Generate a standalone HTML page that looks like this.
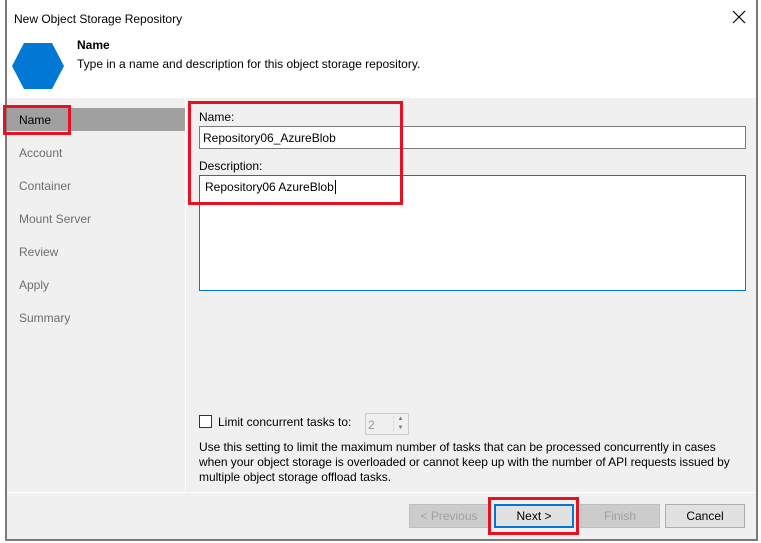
<!DOCTYPE html>
<html><head><meta charset="utf-8"><style>
*{margin:0;padding:0;box-sizing:border-box}
body{width:761px;height:543px;background:#fff;font-family:"Liberation Sans",sans-serif;font-size:12px;color:#000;position:relative;overflow:hidden}
.abs{position:absolute}
.win{left:5px;top:0;width:753px;height:541px;border:2px solid #7a7a7a;border-top:none;background:#f0f0f0}
.nav{left:19px;color:#6d6d6d;font-size:12px}
.btn{top:504px;height:24px;border:1px solid #adadad;background:#e1e1e1;text-align:center;line-height:22px;font-size:12px}
</style></head><body>
<div class="abs win"></div>
<div class="abs" style="left:7px;top:0;width:749px;height:98px;background:#fff"></div>
<div class="abs" style="left:5px;top:0;width:2px;height:98px;background:#7a7a7a"></div>
<div class="abs" style="left:756px;top:0;width:2px;height:98px;background:#7a7a7a"></div>
<div class="abs" style="left:14px;top:12px;font-size:12px">New Object Storage Repository</div>
<svg class="abs" style="left:732px;top:10px" width="14" height="14"><path d="M1 1L13 13M13 1L1 13" stroke="#000" stroke-width="1.2"/></svg>
<svg class="abs" style="left:11px;top:42px" width="54" height="48"><polygon points="13,1 41,1 53,24 41,47 13,47 1,24" fill="#0078d4"/></svg>
<div class="abs" style="left:77px;top:38px;font-weight:bold;font-size:12px">Name</div>
<div class="abs" style="left:77px;top:57px;font-size:12px">Type in a name and description for this object storage repository.</div>
<div class="abs" style="left:185px;top:98px;width:1px;height:394px;background:#fff"></div>
<div class="abs" style="left:7px;top:492px;width:749px;height:1px;background:#fff"></div>
<div class="abs" style="left:7px;top:108px;width:178px;height:23px;background:#a0a0a0"></div>
<div class="abs" style="left:19px;top:113px;font-size:12px">Name</div>
<div class="abs" style="left:3px;top:105px;width:68px;height:30px;border:3px solid #e81123"></div>
<div class="abs nav" style="top:146px">Account</div>
<div class="abs nav" style="top:179px">Container</div>
<div class="abs nav" style="top:212px">Mount Server</div>
<div class="abs nav" style="top:245px">Review</div>
<div class="abs nav" style="top:278px">Apply</div>
<div class="abs nav" style="top:311px">Summary</div>
<div class="abs" style="left:199px;top:110px;font-size:12px">Name:</div>
<div class="abs" style="left:199px;top:126px;width:547px;height:23px;background:#fff;border:1px solid #7a7a7a;padding:4px 3px;font-size:12px">Repository06_AzureBlob</div>
<div class="abs" style="left:199px;top:159px;font-size:12px">Description:</div>
<div class="abs" style="left:199px;top:175px;width:547px;height:116px;background:#fff;border:1px solid #0078d4;padding:4px 5px;font-size:12px">Repository06 AzureBlob<span style="border-left:1px solid #000;margin-left:1px"></span></div>
<div class="abs" style="left:188px;top:101px;width:215px;height:104px;border:3px solid #e81123"></div>
<div class="abs" style="left:199px;top:415px;width:13px;height:13px;border:1px solid #333;background:#fff"></div>
<div class="abs" style="left:218px;top:415px;font-size:12px">Limit concurrent tasks to:</div>
<div class="abs" style="left:365px;top:413px;width:44px;height:22px;border:1px solid #ccc;background:#f0f0f0;color:#999;padding:4px 2px;font-size:12px">2</div>
<div class="abs" style="left:393px;top:415px;width:14px;height:18px;border-left:1px solid #ddd;color:#777;font-size:6px;text-align:center;line-height:9px">▲<br>▼</div>
<div class="abs" style="left:199px;top:440px;line-height:15px;font-size:12px;letter-spacing:-0.05px">Use this setting to limit the maximum number of tasks that can be processed concurrently in cases<br>when your object storage is overloaded or cannot keep up with the number of API requests issued by<br>multiple object storage offload tasks.</div>
<div class="abs btn" style="left:409px;width:80px;color:#a0a0a0;background:#ccc;border-color:#bfbfbf">&lt; Previous</div>
<div class="abs btn" style="left:494px;width:80px;border:2px solid #0078d4;line-height:20px">Next &gt;</div>
<div class="abs btn" style="left:580px;width:80px;color:#a0a0a0;background:#ccc;border-color:#bfbfbf">Finish</div>
<div class="abs btn" style="left:665px;width:80px">Cancel</div>
<div class="abs" style="left:488px;top:497px;width:91px;height:38px;border:3px solid #e81123"></div>
</body></html>
